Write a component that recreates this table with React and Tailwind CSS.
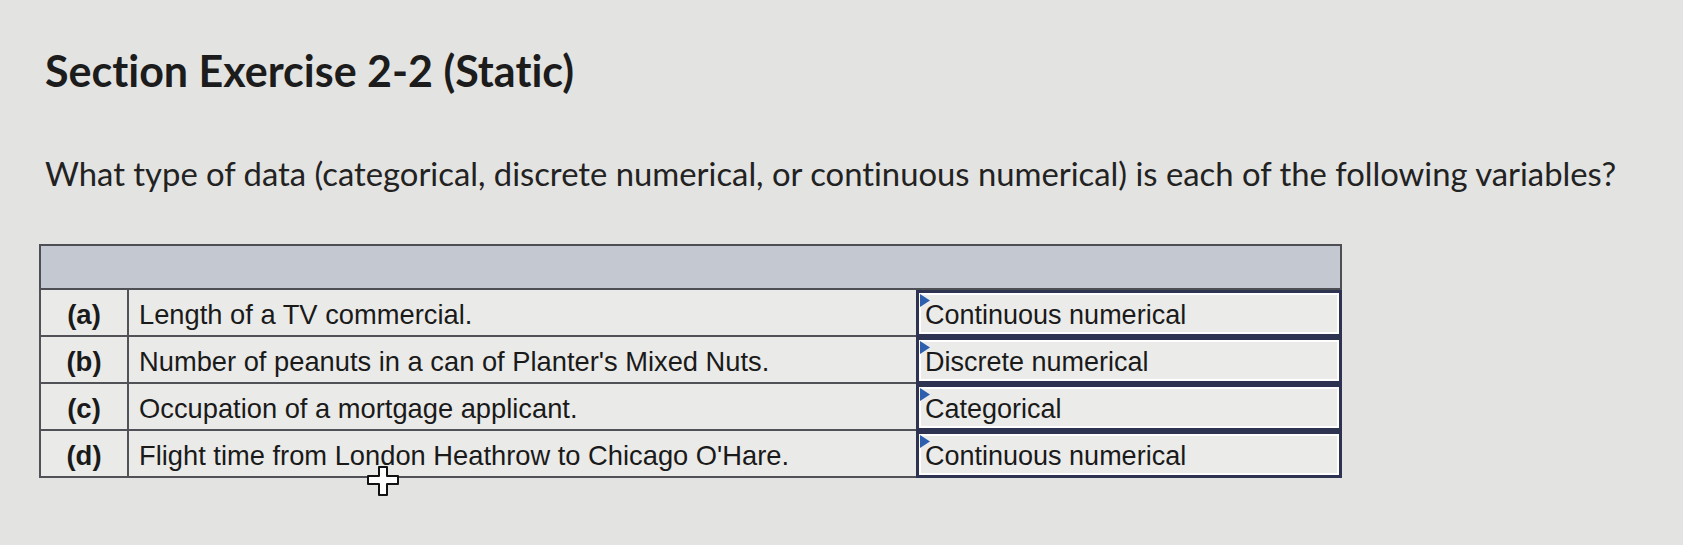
import React from "react";

const rows = [
  ["(a)", "Length of a TV commercial.", "Continuous numerical"],
  ["(b)", "Number of peanuts in a can of Planter's Mixed Nuts.", "Discrete numerical"],
  ["(c)", "Occupation of a mortgage applicant.", "Categorical"],
  ["(d)", "Flight time from London Heathrow to Chicago O'Hare.", "Continuous numerical"],
];

function AnswerCell({ text }) {
  return (
    <div className="relative w-[426px] h-full border-[3px] border-[#2e3352] bg-[#ebebe9] shadow-[inset_0_0_0_2px_#ffffff] flex items-center pl-[6px] pt-[4px]">
      <svg className="absolute left-[1px] top-[1px]" width="10" height="13" viewBox="0 0 10 13">
        <polygon points="0,0 10,6.5 0,13" fill="#2d5fae" />
      </svg>
      <span className="text-[27px] leading-none text-[#1a1a1a] font-['Liberation_Sans',Arial,sans-serif]">{text}</span>
    </div>
  );
}

export default function App() {
  return (
    <div className="relative w-[1683px] h-[545px] overflow-hidden bg-[#e3e3e1] pl-[45px] pt-[49px] [font-variant-ligatures:none]">
      <h1 className="font-['Lato',sans-serif] font-bold text-[43px] leading-none text-[#1c1c1c]">
        Section Exercise 2-2 (Static)
      </h1>
      <p className="mt-[66px] font-['Lato',sans-serif] text-[32.8px] leading-none text-[#222]">
        What type of data (categorical, discrete numerical, or continuous numerical) is each of the following variables?
      </p>
      <div className="mt-[53px] -ml-[6px] w-[1303px] flex flex-col font-['Liberation_Sans',Arial,sans-serif] text-[#1a1a1a]">
        <div className="h-[46px] bg-[#c4c8d0] border-2 border-[#4d4f55]" />
        {rows.map(([label, question, answer], i) => (
          <div key={i} className="flex h-[47px]">
            <div className="w-[88px] h-full border-l-2 border-b-2 border-[#505257] bg-[#eaeae8] flex items-center justify-center pt-[4px] font-bold text-[27.5px] leading-none">
              {label}
            </div>
            <div className="w-[789px] h-full border-l-2 border-b-2 border-[#505257] bg-[#eaeae8] flex items-center pl-[10px] pt-[4px] text-[27.3px] leading-none">
              {question}
            </div>
            <AnswerCell text={answer} />
          </div>
        ))}
      </div>
      <svg className="absolute left-[367px] top-[466px]" width="32" height="30" viewBox="0 0 32 30">
        <path
          d="M12 1 H20 V10 H31 V18 H20 V29 H12 V18 H1 V10 H12 Z"
          fill="#ffffff"
          stroke="#111111"
          strokeWidth="2"
          strokeLinejoin="round"
        />
      </svg>
    </div>
  );
}
